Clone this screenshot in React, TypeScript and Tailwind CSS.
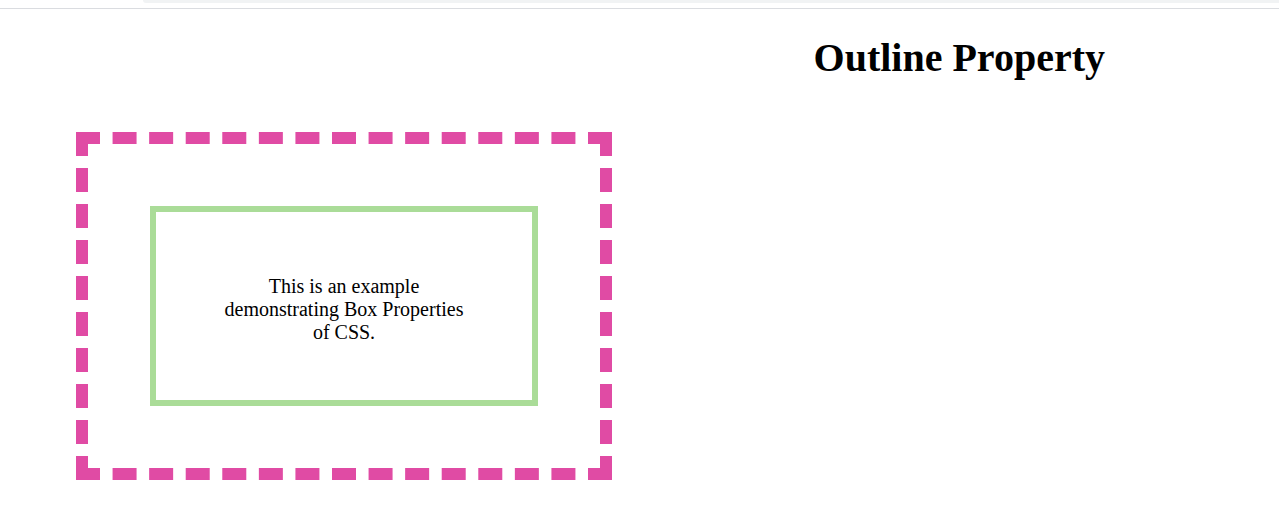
export default function App() {
  return (
    <div className="min-h-[530px] w-full bg-white" style={{ fontFamily: '"Liberation Serif", "Times New Roman", serif' }}>
      <div className="relative h-[9px] border-b border-[#dadce0]">
        <div className="absolute left-[143px] right-0 top-0 h-[3px] rounded-bl-[6px] bg-[#f1f3f4]" />
      </div>
      <div className="flex">
        <div className="w-1/2 pl-[76px] pt-[123px]">
          <div className="inline-block border-[12px] border-dashed border-[#e04ba4] p-[62px]">
            <div className="flex h-[200px] w-[388px] items-center justify-center border-[6px] border-[#aadc98] pt-[7px]">
              <p className="w-[250px] text-center text-[20px] leading-[23px] text-black">
                This is an example demonstrating Box Properties of CSS.
              </p>
            </div>
          </div>
        </div>
        <div className="w-1/2 pt-[26px] text-center">
          <h1 className="text-[40px] font-bold leading-[46px] text-black">Outline Property</h1>
        </div>
      </div>
    </div>
  );
}
